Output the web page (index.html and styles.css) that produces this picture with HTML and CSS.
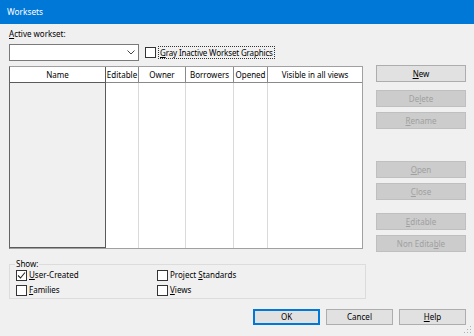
FILE: index.html
```html
<!DOCTYPE html>
<html lang="en">
<head>
    <meta charset="UTF-8">
    <title>Worksets</title>
    <link rel="stylesheet" href="styles.css">
</head>
<body>
    <div class="dialog">
        <div class="titlebar">Worksets</div>

        <div class="content">
            <div class="label"><u>A</u>ctive workset:</div>
            <div class="top-row">
                <div class="combo">
                    <svg class="chevron" width="8" height="5" viewBox="0 0 8 5"><path d="M0.5 0.5 L4 4 L7.5 0.5" fill="none" stroke="#444" stroke-width="1"/></svg>
                </div>
                <label class="check focus">
                    <span class="box"></span>
                    <span class="focus-text"><u>G</u>ray Inactive Workset Graphics</span>
                </label>
            </div>

            <div class="main">
                <table class="grid">
                    <colgroup>
                        <col style="width:96px">
                        <col style="width:33px">
                        <col style="width:47px">
                        <col style="width:48px">
                        <col style="width:34px">
                        <col>
                    </colgroup>
                    <thead>
                        <tr>
                            <th class="name">Name</th>
                            <th>Editable</th>
                            <th>Owner</th>
                            <th>Borrowers</th>
                            <th>Opened</th>
                            <th class="last">Visible in all views</th>
                        </tr>
                    </thead>
                    <tbody>
                        <tr>
                            <td class="name"></td>
                            <td></td>
                            <td></td>
                            <td></td>
                            <td></td>
                            <td class="last"></td>
                        </tr>
                    </tbody>
                </table>

                <div class="side">
                    <button class="btn"><u>N</u>ew</button>
                    <button class="btn off gap-s">De<u>l</u>ete</button>
                    <button class="btn off gap-xs"><u>R</u>ename</button>
                    <button class="btn off gap-l"><u>O</u>pen</button>
                    <button class="btn off gap-xs"><u>C</u>lose</button>
                    <button class="btn off gap-m"><u>E</u>ditable</button>
                    <button class="btn off gap-xs">Non Edita<u>b</u>le</button>
                </div>
            </div>

            <fieldset class="show">
                <legend>Show:</legend>
                <div class="show-grid">
                    <label class="check"><span class="box checked">
                        <svg width="9" height="9" viewBox="0 0 9 9"><path d="M1 4.5 L3.5 7 L8 1.5" fill="none" stroke="#222" stroke-width="1.1"/></svg>
                    </span><span><u>U</u>ser-Created</span></label>
                    <label class="check"><span class="box"></span><span>Project <u>S</u>tandards</span></label>
                    <label class="check"><span class="box"></span><span><u>F</u>amilies</span></label>
                    <label class="check"><span class="box"></span><span><u>V</u>iews</span></label>
                </div>
            </fieldset>

            <div class="footer">
                <button class="btn default">OK</button>
                <button class="btn">Cancel</button>
                <button class="btn"><u>H</u>elp</button>
            </div>
        </div>

        <svg class="grip" width="8" height="8" viewBox="0 0 8 8">
            <rect x="6" y="0" width="1" height="1" fill="#b0b0b0"/>
            <rect x="3" y="3" width="1" height="1" fill="#b0b0b0"/>
            <rect x="6" y="3" width="1" height="1" fill="#b0b0b0"/>
            <rect x="0" y="6" width="1" height="1" fill="#b0b0b0"/>
            <rect x="3" y="6" width="1" height="1" fill="#b0b0b0"/>
            <rect x="6" y="6" width="1" height="1" fill="#b0b0b0"/>
        </svg>
    </div>
</body>
</html>
```

FILE: styles.css
```css
* {
    box-sizing: border-box;
}
body {
    margin: 0;
    background-color: #f0f0f0;
    font-family: "Noto Sans", "Open Sans", sans-serif;
    font-size: 8px;
    line-height: 12px;
    color: #000;
}
u {
    text-decoration: underline;
    text-decoration-thickness: 1px;
    text-underline-offset: 1px;
}
.dialog {
    position: relative;
    width: 474px;
    height: 336px;
    overflow: hidden;
}
.titlebar {
    height: 24px;
    padding-left: 7px;
    background-color: #0078d7;
    color: #fff;
    font-size: 8.3px;
    line-height: 23px;
}
.content {
    padding: 4px 8px 0 9px;
}
.label {
    margin-bottom: 4px;
}
.top-row {
    display: flex;
    align-items: center;
    gap: 6px;
    height: 17px;
}
.combo {
    width: 130px;
    height: 17px;
    background-color: #fff;
    border: 1px solid #7a7a7a;
    display: flex;
    justify-content: flex-end;
    align-items: center;
    padding-right: 3px;
}
.check {
    display: flex;
    align-items: center;
    gap: 2px;
}
.box {
    width: 11px;
    height: 11px;
    border: 1px solid #333;
    background-color: #fff;
    display: flex;
    align-items: center;
    justify-content: center;
}
.focus-text {
    border: 1px dotted #333;
    padding: 0 1px;
    line-height: 11px;
    letter-spacing: -0.15px;
}
.main {
    display: flex;
    gap: 13px;
    margin-top: 4px;
}
.grid {
    width: 354px;
    height: 183px;
    margin-top: 1px;
    table-layout: fixed;
    border-collapse: separate;
    border-spacing: 0;
    border: 1px solid #a0a0a0;
    border-left-color: #646464;
    background-color: #fff;
}
.grid th {
    height: 16px;
    font-weight: normal;
    text-align: center;
    white-space: nowrap;
    overflow: hidden;
    padding: 0;
    border-right: 1px solid #8a8a8a;
    border-bottom: 1px solid #8a8a8a;
    background-color: #fff;
}
.grid td {
    padding: 0;
    border-right: 1px solid #dadada;
}
.grid th.name {
    border-right-color: #5a5a5a;
    border-bottom-color: #5a5a5a;
}
.grid td.name {
    background-color: #f0f0f0;
    border-right: 1px solid #5a5a5a;
    border-bottom: 1px solid #5a5a5a;
}
.grid .last {
    border-right: none;
}
.side {
    width: 90px;
    display: flex;
    flex-direction: column;
}
.btn {
    height: 17px;
    padding: 0;
    font-family: inherit;
    font-size: 8px;
    line-height: 12px;
    color: #000;
    background-color: #e1e1e1;
    border: 1px solid #adadad;
}
.btn.off {
    background-color: #cccccc;
    border-color: #bfbfbf;
    color: #a0a0a0;
}
.gap-xs {
    margin-top: 5px;
}
.gap-s {
    margin-top: 8px;
}
.gap-m {
    margin-top: 13px;
}
.gap-l {
    margin-top: 32px;
}
.show {
    width: 357px;
    height: 41px;
    margin: 6px 0 0 0;
    padding: 0 0 0 6px;
    border: 1px solid #dcdcdc;
}
.show legend {
    padding: 0 1px;
    margin-left: -1px;
}
.show-grid {
    display: grid;
    grid-template-columns: 141px 1fr;
    row-gap: 3px;
    margin-top: -1px;
}
.footer {
    display: flex;
    justify-content: flex-end;
    gap: 6px;
    margin-top: 10px;
}
.footer .btn {
    width: 67px;
    height: 16px;
}
.footer .btn.default {
    border: 2px solid #0078d7;
}
.grip {
    position: absolute;
    right: 2px;
    bottom: 2px;
}
```
